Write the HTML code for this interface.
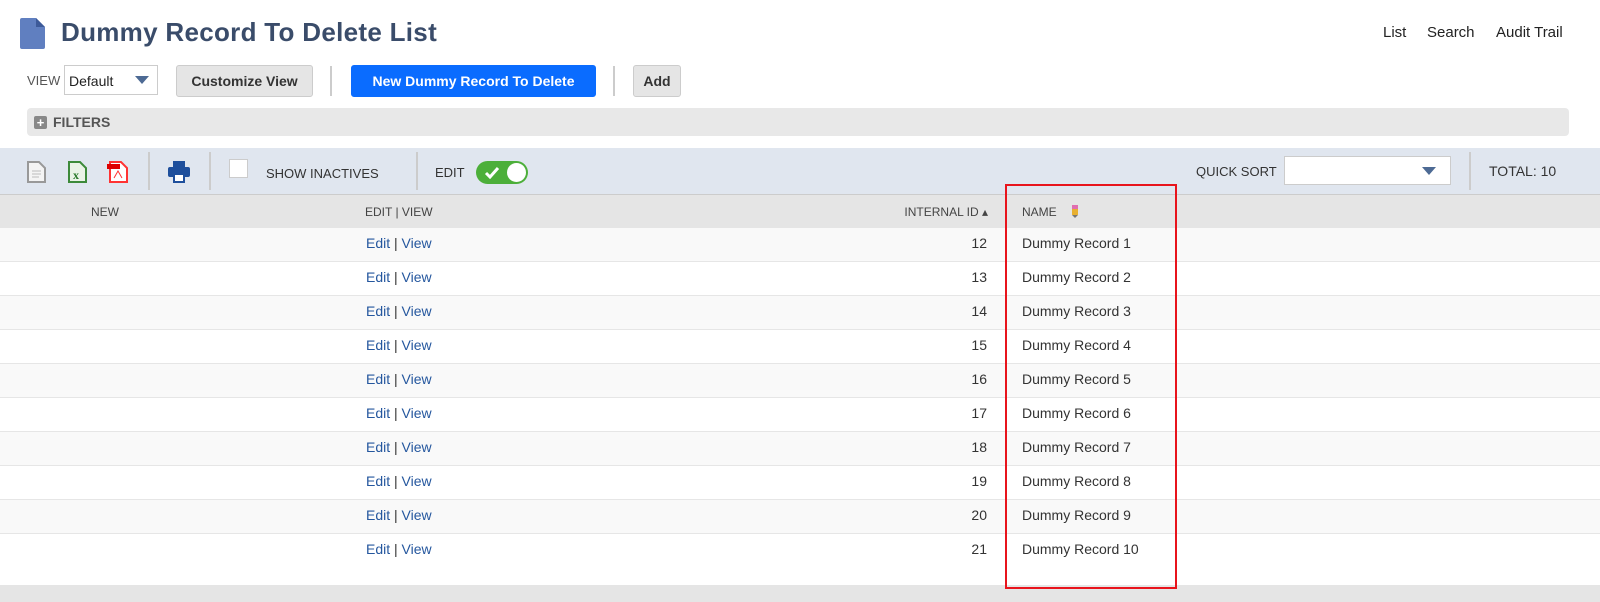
<!DOCTYPE html>
<html><head><meta charset="utf-8"><style>
*{box-sizing:border-box;margin:0;padding:0}
body{width:1600px;height:602px;overflow:hidden;background:#fff;font-family:"Liberation Sans",sans-serif;color:#333;position:relative}
.a{position:absolute;white-space:nowrap}
.btn{position:absolute;background:#e5e5e5;border:1px solid #ccc;border-radius:3px;font-size:14px;font-weight:bold;color:#333;display:flex;align-items:center;justify-content:center}
.sep{position:absolute;width:2px;background:#ccc}
.row{position:absolute;left:0;width:1600px;height:34px;border-bottom:1px solid #e6e6e6;font-size:14px}
.row span{position:absolute;top:7px}
.lk{color:#25579e}
</style></head><body>
<svg class="a" style="left:20px;top:18px" width="25" height="31" viewBox="0 0 25 31"><path d="M2 0H16L25 9V29Q25 31 23 31H2Q0 31 0 29V2Q0 0 2 0Z" fill="#607fc0"/><path d="M16 0V9H25Z" fill="#3d5a99"/></svg>
<div class="a" style="left:61px;top:17px;font-size:26px;font-weight:bold;color:#3a4c6a;letter-spacing:0.3px">Dummy Record To Delete List</div>
<div class="a" style="left:1383px;top:24px;font-size:15px;color:#222">List</div>
<div class="a" style="left:1427px;top:24px;font-size:15px;color:#222">Search</div>
<div class="a" style="left:1496px;top:24px;font-size:15px;color:#222">Audit Trail</div>
<div class="a" style="left:27px;top:73px;font-size:13px;color:#555">VIEW</div>
<div class="a" style="left:64px;top:65px;width:94px;height:30px;border:1px solid #ccc;background:#fff;font-size:14px;padding:7px 4px;color:#222">Default<svg style="position:absolute;right:8px;top:10px" width="14" height="9"><path d="M0 0H14L7 8Z" fill="#4d6a94"/></svg></div>
<div class="btn" style="left:176px;top:65px;width:137px;height:32px">Customize View</div>
<div class="sep" style="left:330px;top:66px;height:30px"></div>
<div class="btn" style="left:351px;top:65px;width:245px;height:32px;background:#0a6cff;border-color:#0a6cff;color:#fff">New Dummy Record To Delete</div>
<div class="sep" style="left:613px;top:66px;height:30px"></div>
<div class="btn" style="left:633px;top:65px;width:48px;height:32px">Add</div>
<div class="a" style="left:27px;top:108px;width:1542px;height:28px;background:#e8e8e8;border-radius:4px"></div>
<div class="a" style="left:34px;top:116px;width:13px;height:13px;background:#888;border-radius:2px;color:#fff;font-size:13px;line-height:13px;text-align:center;font-weight:bold">+</div>
<div class="a" style="left:53px;top:114px;font-size:14px;font-weight:bold;color:#555">FILTERS</div>
<div class="a" style="left:0;top:148px;width:1600px;height:47px;background:#e0e6ef;border-bottom:1px solid #ccc"></div>
<svg class="a" style="left:27px;top:161px" width="19" height="22"><path d="M1 1H12L18 7V21H1Z" fill="#f4f4f4" stroke="#999" stroke-width="2"/><path d="M5 10H14M5 13H14M5 16H12" stroke="#bbb"/></svg>
<svg class="a" style="left:68px;top:161px" width="19" height="22"><path d="M1 1H12L18 7V21H1Z" fill="#eaf3e6" stroke="#3d8a3a" stroke-width="2"/><text x="5" y="18" font-size="12" font-weight="bold" fill="#2c7a2c" font-family="Liberation Serif">x</text></svg>
<svg class="a" style="left:107px;top:161px" width="22" height="22"><path d="M3 1H14L20 7V21H3Z" fill="#fff" stroke="#f33" stroke-width="2"/><rect x="0" y="3" width="13" height="5" fill="#d00"/><path d="M7 17L11 10L15 17" stroke="#f33" fill="none"/></svg>
<div class="sep" style="left:148px;top:152px;height:38px"></div>
<svg class="a" style="left:168px;top:161px" width="22" height="22"><rect x="5" y="0" width="12" height="6" fill="#1e4f9c"/><rect x="0" y="6" width="22" height="10" rx="2" fill="#1e4f9c"/><rect x="5" y="12" width="12" height="10" fill="#1e4f9c"/><rect x="7" y="14" width="8" height="6" fill="#fff"/></svg>
<div class="sep" style="left:209px;top:152px;height:38px"></div>
<div class="a" style="left:229px;top:159px;width:19px;height:19px;background:#fff;border:1px solid #ccc"></div>
<div class="a" style="left:266px;top:166px;font-size:13px;color:#333">SHOW INACTIVES</div>
<div class="sep" style="left:416px;top:152px;height:38px"></div>
<div class="a" style="left:435px;top:165px;font-size:13px;color:#333">EDIT</div>
<div class="a" style="left:476px;top:161px;width:52px;height:23px;background:#4caf3a;border-radius:12px"><svg style="position:absolute;left:8px;top:5px" width="16" height="13"><path d="M2 7L6 11L14 2" stroke="#fff" stroke-width="3" fill="none"/></svg><div style="position:absolute;right:2px;top:2px;width:19px;height:19px;border-radius:50%;background:#fff"></div></div>
<div class="a" style="left:1196px;top:164px;font-size:13px;color:#333">QUICK SORT</div>
<div class="a" style="left:1284px;top:156px;width:167px;height:29px;background:#fff;border:1px solid #ccc"><svg style="position:absolute;right:14px;top:10px" width="14" height="9"><path d="M0 0H14L7 8Z" fill="#4d6a94"/></svg></div>
<div class="sep" style="left:1469px;top:152px;height:38px"></div>
<div class="a" style="left:1489px;top:163px;font-size:14px;color:#333">TOTAL: 10</div>
<div class="a" style="left:0;top:195px;width:1600px;height:33px;background:#e5e5e5;font-size:12px;color:#444">
<span class="a" style="left:91px;top:10px">NEW</span>
<span class="a" style="left:365px;top:10px">EDIT | VIEW</span>
<span class="a" style="right:612px;top:10px">INTERNAL ID ▴</span>
<span class="a" style="left:1022px;top:10px">NAME</span>
<svg class="a" style="left:1072px;top:10px" width="6" height="13"><rect x="0" y="0" width="6" height="4" fill="#e06fb0"/><rect x="0" y="4" width="6" height="6" fill="#e8b030"/><path d="M0 10L3 13L6 10Z" fill="#777"/></svg>
</div>
<div class="row" style="top:228px;background:#f9f9f9"><span style="left:366px"><a class="lk">Edit</a> | <a class="lk">View</a></span><span style="right:613px">12</span><span style="left:1022px">Dummy Record 1</span></div>
<div class="row" style="top:262px;background:#fff"><span style="left:366px"><a class="lk">Edit</a> | <a class="lk">View</a></span><span style="right:613px">13</span><span style="left:1022px">Dummy Record 2</span></div>
<div class="row" style="top:296px;background:#f9f9f9"><span style="left:366px"><a class="lk">Edit</a> | <a class="lk">View</a></span><span style="right:613px">14</span><span style="left:1022px">Dummy Record 3</span></div>
<div class="row" style="top:330px;background:#fff"><span style="left:366px"><a class="lk">Edit</a> | <a class="lk">View</a></span><span style="right:613px">15</span><span style="left:1022px">Dummy Record 4</span></div>
<div class="row" style="top:364px;background:#f9f9f9"><span style="left:366px"><a class="lk">Edit</a> | <a class="lk">View</a></span><span style="right:613px">16</span><span style="left:1022px">Dummy Record 5</span></div>
<div class="row" style="top:398px;background:#fff"><span style="left:366px"><a class="lk">Edit</a> | <a class="lk">View</a></span><span style="right:613px">17</span><span style="left:1022px">Dummy Record 6</span></div>
<div class="row" style="top:432px;background:#f9f9f9"><span style="left:366px"><a class="lk">Edit</a> | <a class="lk">View</a></span><span style="right:613px">18</span><span style="left:1022px">Dummy Record 7</span></div>
<div class="row" style="top:466px;background:#fff"><span style="left:366px"><a class="lk">Edit</a> | <a class="lk">View</a></span><span style="right:613px">19</span><span style="left:1022px">Dummy Record 8</span></div>
<div class="row" style="top:500px;background:#f9f9f9"><span style="left:366px"><a class="lk">Edit</a> | <a class="lk">View</a></span><span style="right:613px">20</span><span style="left:1022px">Dummy Record 9</span></div>
<div class="row" style="top:534px;height:51px;background:#fff;border:none"><span style="left:366px"><a class="lk">Edit</a> | <a class="lk">View</a></span><span style="right:613px">21</span><span style="left:1022px">Dummy Record 10</span></div>
<div class="a" style="left:0;top:585px;width:1600px;height:17px;background:#e5e5e5"></div>
<div class="a" style="left:1005px;top:184px;width:172px;height:405px;border:2px solid #e8141c"></div>
</body></html>
